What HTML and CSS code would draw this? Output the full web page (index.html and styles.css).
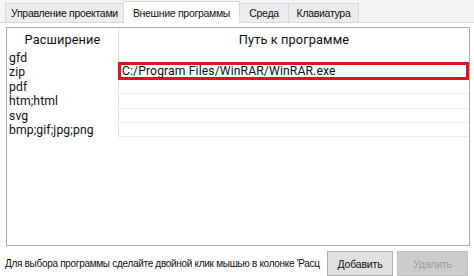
FILE: index.html
```html
<!DOCTYPE html>
<html lang="ru">

<head>
    <meta charset="UTF-8">
    <title>Внешние программы</title>
    <link rel="stylesheet" href="styles.css">
</head>

<body>
    <div class="tabs">
        <div class="tab tab-projects">Управление проектами</div>
        <div class="tab tab-programs active">Внешние программы</div>
        <div class="tab tab-env">Среда</div>
        <div class="tab tab-keys">Клавиатура</div>
    </div>

    <div class="panel">
        <div class="grid-box">
            <div class="grid">
                <div class="head">Расширение</div>
                <div class="head path">Путь к программе</div>

                <div class="ext">gfd</div>
                <div class="path"></div>

                <div class="ext">zip</div>
                <div class="path editing"><span class="editor">C:/Program Files/WinRAR/WinRAR.exe</span></div>

                <div class="ext">pdf</div>
                <div class="path"></div>

                <div class="ext">htm;html</div>
                <div class="path"></div>

                <div class="ext">svg</div>
                <div class="path"></div>

                <div class="ext">bmp;gif;jpg;png</div>
                <div class="path"></div>
            </div>
        </div>

        <div class="footer">
            <div class="hint">Для выбора программы сделайте двойной клик мышью в колонке 'Расц</div>
            <button class="btn btn-add">Добавить</button>
            <button class="btn btn-remove" disabled>Удалить</button>
        </div>
    </div>
</body>

</html>
```

FILE: styles.css
```css
body {
    margin: 0;
    width: 474px;
    height: 276px;
    overflow: hidden;
    background-color: #f5f5f5;
    font-family: Roboto, "Open Sans", sans-serif;
    color: #111;
}

.tabs {
    display: flex;
    padding: 3px 0 0 5px;
    height: 19px;
    border-bottom: 1px solid #dadada;
}

.tab {
    font-family: "Liberation Sans", Arial, sans-serif;
    font-size: 10.5px;
    letter-spacing: -0.3px;
    text-align: center;
    line-height: 19px;
    background-color: #ececec;
    border: 1px solid #dadada;
    border-bottom: none;
    margin-right: -1px;
    box-sizing: border-box;
    white-space: nowrap;
}

.tab-projects {
    width: 119px;
}

.tab-programs {
    width: 117px;
}

.tab-env {
    width: 50px;
}

.tab-keys {
    width: 71px;
}

.tab.active {
    background-color: #fff;
    margin-top: -2px;
    margin-bottom: -1px;
    line-height: 22px;
    position: relative;
}

.panel {
    background-color: #fff;
    height: 253px;
    padding: 4px 4px 0 6px;
    box-sizing: border-box;
}

.grid-box {
    height: 219px;
    border: 1px solid #adadad;
    box-sizing: border-box;
}

.grid {
    display: grid;
    grid-template-columns: 111px 1fr;
    grid-template-rows: 23px;
    grid-auto-rows: 14.4px;
    font-size: 12.2px;
    letter-spacing: 0.1px;
    line-height: 14px;
}

.grid .head {
    line-height: 24px;
    text-align: center;
    font-size: 12.8px;
}

.grid .head.path {
    border-bottom: none;
}

.ext {
    padding-left: 2px;
    white-space: nowrap;
}

.path {
    border-left: 1px solid #e3e3e3;
    border-bottom: 1px solid #ececec;
    box-sizing: border-box;
}

.path.editing {
    position: relative;
}

.editor {
    position: absolute;
    z-index: 1;
    top: -3px;
    left: -1px;
    right: 0;
    height: 18px;
    line-height: 12px;
    padding-left: 1px;
    border: 3px solid #e4101c;
    box-sizing: border-box;
    background-color: #fff;
    white-space: nowrap;
}

.footer {
    display: flex;
    align-items: center;
    margin-top: 5px;
    height: 25px;
}

.hint {
    font-family: "Liberation Sans", Arial, sans-serif;
    font-size: 10px;
    letter-spacing: -0.3px;
    white-space: nowrap;
    width: 322px;
    margin-left: -1px;
}

.btn {
    font-family: "Liberation Sans", Arial, sans-serif;
    font-size: 10.5px;
    letter-spacing: -0.2px;
    height: 25px;
    background-color: #e1e1e1;
    border: 1px solid #adadad;
    color: #111;
    padding: 0;
}

.btn-add {
    width: 66px;
}

.btn-remove {
    width: 71px;
    margin-left: 4px;
}

.btn:disabled {
    background-color: #cccccc;
    border-color: #bfbfbf;
    color: #9a9a9a;
}
```
